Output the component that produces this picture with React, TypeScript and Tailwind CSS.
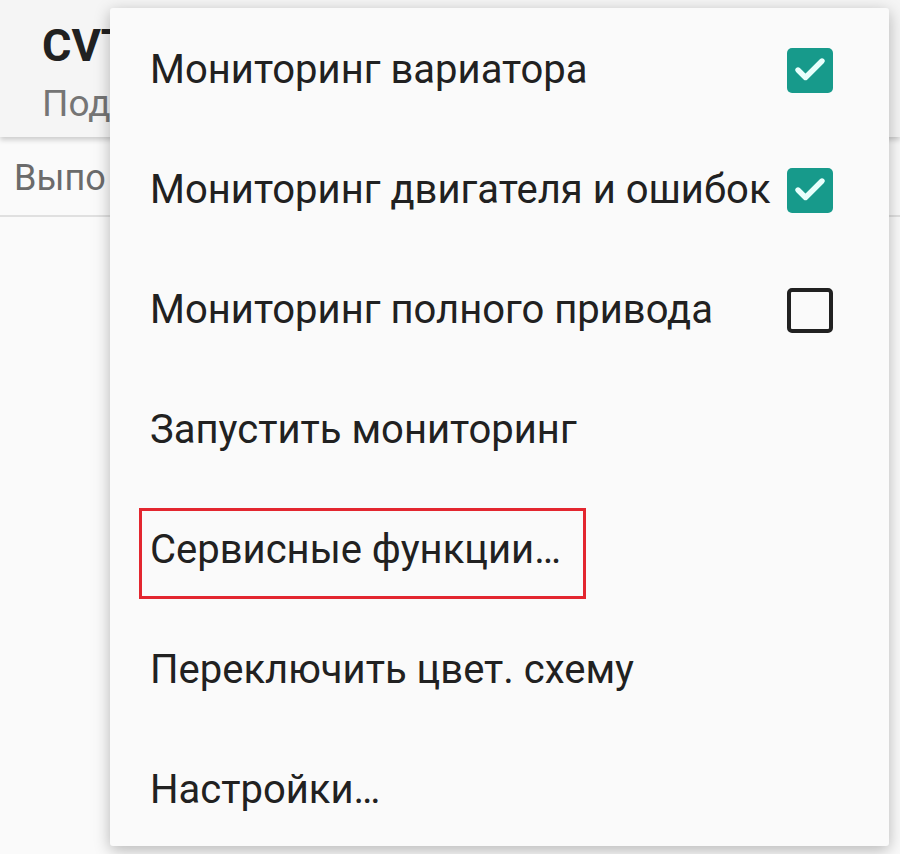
import { Check } from "lucide-react";

type MenuItem = {
  label: string;
  checked?: boolean;
  marked?: boolean;
};

const items: MenuItem[] = [
  { label: "Мониторинг вариатора", checked: true },
  { label: "Мониторинг двигателя и ошибок", checked: true },
  { label: "Мониторинг полного привода", checked: false },
  { label: "Запустить мониторинг" },
  { label: "Сервисные функции…", marked: true },
  { label: "Переключить цвет. схему" },
  { label: "Настройки…" },
];

function CheckBox({ checked }: { checked: boolean }) {
  if (checked) {
    return (
      <div className="w-[46px] h-[45px] rounded-[5px] bg-[#179a8b] flex items-center justify-center shrink-0">
        <Check className="w-[36px] h-[36px] text-[#e8fffc]" strokeWidth={3.6} />
      </div>
    );
  }
  return (
    <div className="w-[46px] h-[45px] rounded-[5px] border-[4px] border-[#212121] shrink-0" />
  );
}

export default function App() {
  return (
    <div
      className="relative w-[900px] h-[854px] overflow-hidden bg-[#fafafa]"
      style={{ fontFamily: "Roboto, 'Noto Sans', sans-serif" }}
    >
      {/* underlying screen, cut off by the menu */}
      <header className="h-[137px] bg-[#f5f5f5] shadow-[0_3px_5px_rgba(0,0,0,0.18)] pl-[42px] pt-[20px] relative z-0">
        <div className="w-[68px] overflow-hidden whitespace-nowrap">
          <div className="text-[45px] font-bold leading-[52px] text-[#212121]">CVT</div>
          <div className="text-[37px] leading-[44px] text-[#757575] mt-[10px]">Под</div>
        </div>
      </header>
      <div className="h-[80px] border-b-[2px] border-[#e0e0e0] pl-[14px] flex items-center">
        <div className="w-[96px] overflow-hidden whitespace-nowrap text-[36px] text-[#6b6b6b] pt-[4px]">
          Выпо
        </div>
      </div>

      {/* overflow menu */}
      <div className="absolute left-[110px] top-[8px] w-[779px] h-[838px] bg-[#fafafa] rounded-[3px] shadow-[0_4px_16px_rgba(0,0,0,0.28)] pt-[2px] overflow-hidden">
        {items.map((item, i) => (
          <div
            key={i}
            className="h-[120px] flex items-center justify-between pl-[40px] pr-[56px]"
          >
            {item.marked ? (
              <span className="-ml-[11px] h-[91px] pl-[8px] pr-[22px] flex items-center border-[3px] border-[#e3262f] text-[40px] text-[#212121] mt-[6px] whitespace-nowrap">
                <span className="-mt-[6px]">{item.label}</span>
              </span>
            ) : (
              <span className="text-[40px] text-[#212121] whitespace-nowrap">{item.label}</span>
            )}
            {item.checked !== undefined && <CheckBox checked={item.checked} />}
          </div>
        ))}
      </div>
    </div>
  );
}
